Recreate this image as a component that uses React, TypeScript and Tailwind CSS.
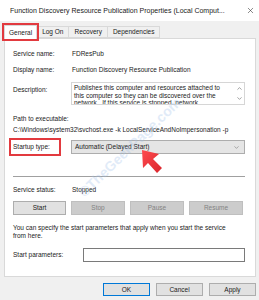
import { ChevronDown, ChevronUp, X } from 'lucide-react'

const labelCls = "w-[58px] shrink-0"

function ActionButton({ label, disabled }: { label: string; disabled?: boolean }) {
  return (
    <div
      className={
        disabled
          ? "w-[54px] h-[14px] flex items-center justify-center bg-[#cccccc] border border-[#bfbfbf] text-[#838383]"
          : "w-[53px] h-[14px] flex items-center justify-center bg-[#e1e1e1] border border-[#adadad] text-[#1a1a1a]"
      }
    >
      {label}
    </div>
  )
}

export default function App() {
  return (
    <div
      className="relative w-[259px] h-[300px] overflow-hidden bg-[#f0f0f0] text-[#1a1a1a] text-[6.5px] leading-[8px]"
      style={{ fontFamily: '"Liberation Sans", Arial, sans-serif' }}
    >
      {/* title bar */}
      <div className="h-[21px] bg-white flex items-center pl-[10px] pr-[4px]">
        <span className="flex-1 text-[7px] whitespace-nowrap overflow-hidden">
          Function Discovery Resource Publication Properties (Local Comput...
        </span>
        <X className="w-[9px] h-[9px] text-[#333]" strokeWidth={1.5} />
      </div>

      {/* tabs */}
      <div className="flex items-end h-[16px] pl-[4px] mt-[1px]">
        <div className="h-[14px] px-[4px] flex items-center bg-white border border-b-0 border-[#d9d9d9] outline-2 outline-[#e23a3f] -mb-[1px] relative z-10">
          General
        </div>
        <div className="h-[12px] px-[5px] flex items-center bg-[#f0f0f0] border border-l-0 border-[#d9d9d9]">Log On</div>
        <div className="h-[12px] px-[5px] flex items-center bg-[#f0f0f0] border border-l-0 border-[#d9d9d9]">Recovery</div>
        <div className="h-[12px] px-[5px] flex items-center bg-[#f0f0f0] border border-l-0 border-[#d9d9d9]">Dependencies</div>
      </div>

      {/* panel */}
      <div className="ml-[4px] w-[252px] h-[239px] bg-white border border-[#d9d9d9] pl-[8px] pr-[10px] flex flex-col">
        <div className="flex mt-[10px] h-[10px] items-center">
          <span className={labelCls}>Service name:</span>
          <span className="pl-[1px]">FDResPub</span>
        </div>
        <div className="flex mt-[6px] h-[10px] items-center">
          <span className={labelCls}>Display name:</span>
          <span className="pl-[1px]">Function Discovery Resource Publication</span>
        </div>
        <div className="flex mt-[7px]">
          <span className={`${labelCls} pt-[4px]`}>Description:</span>
          <div className="flex-1 h-[23px] border border-[#d6d6d6] flex overflow-hidden">
            <div className="flex-1 pl-[2px] pt-[1px] leading-[7.5px] overflow-hidden whitespace-nowrap">
              Publishes this computer and resources attached to
              <br />
              this computer so they can be discovered over the
              <br />
              network.&nbsp; If this service is stopped, network
            </div>
            <div className="w-[9px] flex flex-col items-center justify-between py-[2px]">
              <ChevronUp className="w-[7px] h-[7px] text-[#606060]" strokeWidth={2} />
              <ChevronDown className="w-[7px] h-[7px] text-[#606060]" strokeWidth={2} />
            </div>
          </div>
        </div>
        <div className="mt-[9px] h-[10px] flex items-center">Path to executable:</div>
        <div className="mt-[1px] h-[10px] flex items-center whitespace-nowrap overflow-hidden">
          C:\Windows\system32\svchost.exe -k LocalServiceAndNoImpersonation -p
        </div>
        <div className="flex mt-[5px] h-[14px] items-center">
          <div className="w-[58px] shrink-0 flex">
            <div className="-ml-[4px] w-[52px] h-[18px] border-2 border-[#e23a3f] pl-[2px] flex items-center">
              Startup type:
            </div>
          </div>
          <div className="flex-1 h-[14px] bg-[#e5e5e5] border border-[#adadad] flex items-center pl-[3px] pr-[4px]">
            <span className="flex-1">Automatic (Delayed Start)</span>
            <ChevronDown className="w-[7px] h-[7px] text-[#555]" strokeWidth={1.5} />
          </div>
        </div>
        <div className="mt-[22px] h-px bg-[#a0a0a0]" />
        <div className="flex mt-[8px] h-[10px] items-center">
          <span className={labelCls}>Service status:</span>
          <span className="pl-[1px]">Stopped</span>
        </div>
        <div className="flex mt-[6px] gap-[5px]">
          <ActionButton label="Start" />
          <ActionButton label="Stop" disabled />
          <ActionButton label="Pause" disabled />
          <ActionButton label="Resume" disabled />
        </div>
        <div className="mt-[9px] whitespace-nowrap">
          You can specify the start parameters that apply when you start the service
          <br />
          from here.
        </div>
        <div className="flex mt-[8px] items-center">
          <span className="w-[70px] shrink-0">Start parameters:</span>
          <div className="flex-1 h-[14px] border border-[#7a7a7a] bg-white" />
        </div>
      </div>

      {/* dialog buttons */}
      <div className="flex justify-end gap-[6px] pr-[3px] mt-[6px]">
        <div className="w-[47px] h-[13px] flex items-center justify-center bg-[#e1e1e1] border border-[#0078d7]">OK</div>
        <div className="w-[47px] h-[13px] flex items-center justify-center bg-[#e1e1e1] border border-[#adadad]">Cancel</div>
        <div className="w-[47px] h-[13px] flex items-center justify-center bg-[#e1e1e1] border border-[#adadad]">Apply</div>
      </div>

      {/* watermark */}
      <div className="absolute left-[62px] top-[143px] -rotate-[44deg] text-[14px] font-bold text-[#9fc0ea] opacity-30 whitespace-nowrap pointer-events-none">
        ©TheGeekPage.com
      </div>

      {/* red arrow */}
      <svg className="absolute left-[139px] top-[147px]" width="28" height="28" viewBox="0 0 28 28">
        <defs>
          <linearGradient id="arrowFill" x1="0" y1="0" x2="1" y2="1">
            <stop offset="0" stopColor="#ff4a4f" />
            <stop offset="1" stopColor="#d9262c" />
          </linearGradient>
        </defs>
        <polygon
          points="3,3 4,21 9,16 18,26 23,21 14,12 20,7"
          fill="url(#arrowFill)"
        />
      </svg>
    </div>
  )
}
